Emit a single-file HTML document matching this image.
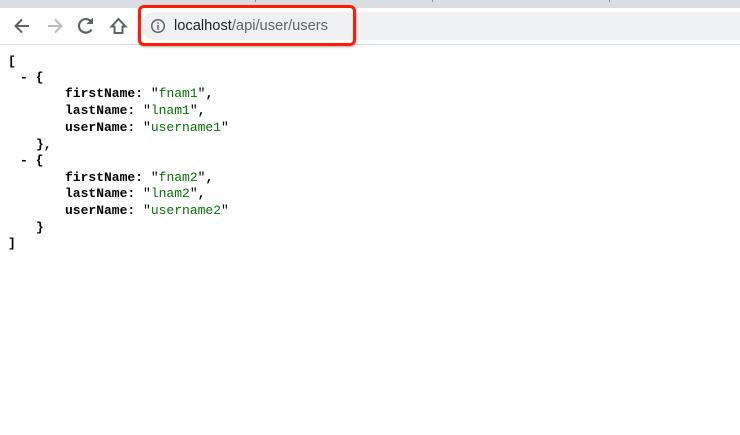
<!DOCTYPE html>
<html>
<head>
<meta charset="utf-8">
<style>
html,body{margin:0;padding:0;width:740px;height:435px;background:#fff;overflow:hidden;position:relative}
.abs{position:absolute}
#strip{left:0;top:0;width:740px;height:8px;background:#dadde1}
.tick{top:0;width:1px;height:2px;background:#8a8c90}
#omni{left:141px;top:12px;width:599px;height:28px;background:#eff0f2;border-radius:14px 0 0 14px}
#line{left:0;top:44px;width:740px;height:1px;background:#d9dadc}
#red{box-sizing:border-box;left:138px;top:5px;width:218px;height:41px;border:3.5px solid #fb1d07;border-radius:6px;box-shadow:0 1px 2px rgba(0,0,0,.35)}
#url{left:174px;top:17px;font:14.67px/18px "Liberation Sans",sans-serif;color:#5f6368;white-space:nowrap}
#url b{font-weight:normal;color:#202124}
.l{position:absolute;font:bold 13px/16px "Liberation Mono",monospace;color:#000;white-space:pre}
.l i{font-style:normal;font-weight:normal;color:#0a6f0a}
.l u{text-decoration:none;font-weight:normal}
</style>
</head>
<body>
<div class="abs" id="strip"></div>
<div class="abs tick" style="left:255px"></div>
<div class="abs tick" style="left:432px"></div>
<div class="abs tick" style="left:609px"></div>
<div class="abs" id="omni"></div>
<div class="abs" id="line"></div>
<svg class="abs" style="left:0;top:0" width="180" height="44" viewBox="0 0 180 44" fill="none">
<path d="M29 26H16.500M22 19.500L15.500 26L22 32.500" stroke="#5f6368" stroke-width="2"/>
<path d="M48 26H60.500M55 19.500L61.500 26L55 32.500" stroke="#b9bbbe" stroke-width="2"/>
<path d="M91.500 29.500A6.800 6.800 0 1 1 91 21.500" stroke="#5f6368" stroke-width="2.200"/>
<path d="M93 17.500V24H86.500Z" fill="#5f6368"/>
<path d="M111.500 26.500L118.500 19L125.500 26.500H122.500V33H114.500V26.500Z" stroke="#5f6368" stroke-width="2"/>
<circle cx="158" cy="26" r="6.300" stroke="#5f6368" stroke-width="1.500"/>
<path d="M158 25V29.800M158 22.200V23.800" stroke="#5f6368" stroke-width="1.500"/>
</svg>
<div class="abs" id="url"><b>localhost</b>/api/user/users</div>
<div class="abs" id="red"></div>

<div class="l" style="left:8px;top:54px">[</div>
<div class="l" style="left:20px;top:70px">- {</div>
<div class="l" style="left:65px;top:86px">firstName: <u>"</u><i>fnam1</i><u>"</u>,</div>
<div class="l" style="left:65px;top:103px">lastName: <u>"</u><i>lnam1</i><u>"</u>,</div>
<div class="l" style="left:65px;top:120px">userName: <u>"</u><i>username1</i><u>"</u></div>
<div class="l" style="left:36px;top:137px">},</div>
<div class="l" style="left:20px;top:153px">- {</div>
<div class="l" style="left:65px;top:170px">firstName: <u>"</u><i>fnam2</i><u>"</u>,</div>
<div class="l" style="left:65px;top:186px">lastName: <u>"</u><i>lnam2</i><u>"</u>,</div>
<div class="l" style="left:65px;top:203px">userName: <u>"</u><i>username2</i><u>"</u></div>
<div class="l" style="left:36px;top:220px">}</div>
<div class="l" style="left:8px;top:236px">]</div>
</body>
</html>
